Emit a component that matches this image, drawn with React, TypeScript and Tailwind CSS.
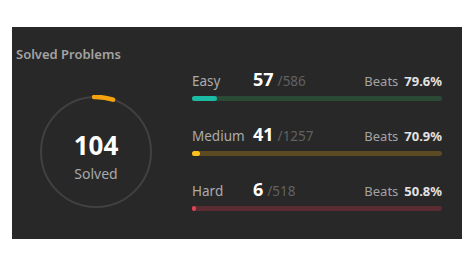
import React from "react";

const rows = [
  { label: "Easy", solved: 57, total: 586, beats: "79.6%", fill: "bg-[#1cbba3]", track: "bg-[#2a4a36]", pct: 10 },
  { label: "Medium", solved: 41, total: 1257, beats: "70.9%", fill: "bg-[#ffc01e]", track: "bg-[#5b4a22]", pct: 3 },
  { label: "Hard", solved: 6, total: 518, beats: "50.8%", fill: "bg-[#e04455]", track: "bg-[#5a2b30]", pct: 1.5 },
];

function Ring() {
  return (
    <div className="relative w-[114px] h-[114px]">
      <svg width="114" height="114" viewBox="0 0 114 114">
        <circle cx="57" cy="57" r="55" fill="none" stroke="#414141" strokeWidth="2" />
        <path d="M55.08 2.03 A55 55 0 0 1 74 4.69" fill="none" stroke="#f5a30f" strokeWidth="4.5" strokeLinecap="round" />
      </svg>
      <div className="absolute top-[35px] left-0 right-0 flex flex-col items-center">
        <div className="text-[26px] leading-[30px] font-bold text-white">104</div>
        <div className="text-[14px] leading-[18px] text-[#a9a9a9] mt-[5px]">Solved</div>
      </div>
    </div>
  );
}

export default function App() {
  return (
    <div className="w-[474px] h-[266px] bg-white pt-[27px] px-[12px]" style={{ fontFamily: '"Noto Sans", "Open Sans", sans-serif' }}>
      <div className="w-[450px] h-[212px] bg-[#282828] pt-[18px]">
        <div className="pl-[4px] h-[18px] text-[13px] leading-[18px] font-semibold text-[#a3a3a3]">Solved Problems</div>
        <div className="flex items-start">
          <div className="w-[180px] pl-[27px] pt-[32px]">
            <Ring />
          </div>
          <div className="w-[250px] pt-[3px] flex flex-col gap-[20px]">
            {rows.map((r) => (
              <div key={r.label} className="flex flex-col gap-[9px]">
                <div className="flex items-baseline h-[21px]">
                  <div className="w-[61px] text-[13.5px] text-[#acacac]">{r.label}</div>
                  <div className="text-[18px] font-bold text-white">{r.solved}</div>
                  <div className="ml-[4px] text-[13.5px] text-[#616161]">/{r.total}</div>
                  <div className="ml-auto text-[13px] text-[#a3a3a3]">Beats</div>
                  <div className="ml-[6px] text-[13px] font-bold text-[#e2e2e2]">{r.beats}</div>
                </div>
                <div className={`h-[5px] w-full rounded-full ${r.track}`}>
                  <div className={`h-[5px] rounded-full ${r.fill}`} style={{ width: `${r.pct}%` }} />
                </div>
              </div>
            ))}
          </div>
        </div>
      </div>
    </div>
  );
}
